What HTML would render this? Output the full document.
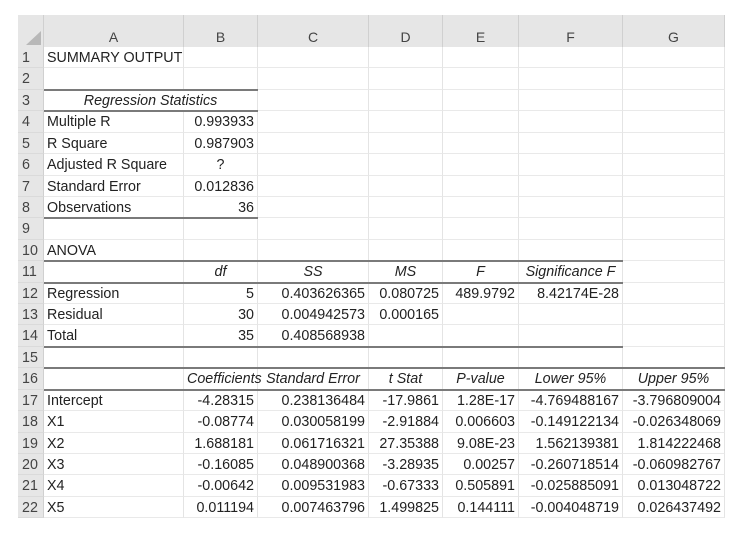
<!DOCTYPE html>
<html><head><meta charset="utf-8"><style>
*{box-sizing:border-box;margin:0;padding:0}
body{width:734px;height:537px;background:#fff;position:relative;overflow:hidden;font-family:"Liberation Sans",sans-serif;font-size:14.3px;color:#222}
.hdr{position:absolute;left:18px;top:15px;height:32px;width:707px;background:#e6e6e6;display:flex}
.hdr div{border-right:1px solid #d0d0d0;text-align:center;padding-top:14px;color:#444;font-size:14px}
.grid{position:absolute;left:18px;top:47px;width:707px}
.r{display:flex;height:21.43px}
.r div{border-right:1px solid #e4e4e4;border-bottom:1px solid #e9e9e9;line-height:23px;white-space:nowrap;overflow:visible;padding:0 3px}
.r div:first-child{background:#e6e6e6;border-right:1px solid #d0d0d0;border-bottom:1px solid #dadada;color:#444;padding-left:4px}
.w0{width:26px}.w1{width:140px}.w2{width:74px}.w3{width:111px}.w4{width:74px}.w5{width:76px}.w6{width:104px}.w7{width:102px}
.n{text-align:right}.c{text-align:center}.i{font-style:italic;text-align:center}
.t{position:absolute;height:2px;background:#7a7a7a}
.tri{position:absolute;left:26px;top:31px;width:0;height:0;border-left:15px solid transparent;border-bottom:14px solid #b8b8b8}
</style></head><body>
<div class="hdr"><div class="w0"></div><div class="w1">A</div><div class="w2">B</div><div class="w3">C</div><div class="w4">D</div><div class="w5">E</div><div class="w6">F</div><div class="w7">G</div></div>
<div class="tri"></div>
<div class="grid">
<div class="r"><div class="w0">1</div><div class="w1">SUMMARY OUTPUT</div><div class="w2"></div><div class="w3"></div><div class="w4"></div><div class="w5"></div><div class="w6"></div><div class="w7"></div></div>
<div class="r"><div class="w0">2</div><div class="w1"></div><div class="w2"></div><div class="w3"></div><div class="w4"></div><div class="w5"></div><div class="w6"></div><div class="w7"></div></div>
<div class="r"><div class="w0">3</div><div class="i" style="width:214px;border-right-color:#e4e4e4">Regression Statistics</div><div class="w3"></div><div class="w4"></div><div class="w5"></div><div class="w6"></div><div class="w7"></div></div>
<div class="r"><div class="w0">4</div><div class="w1">Multiple R</div><div class="w2 n">0.993933</div><div class="w3"></div><div class="w4"></div><div class="w5"></div><div class="w6"></div><div class="w7"></div></div>
<div class="r"><div class="w0">5</div><div class="w1">R Square</div><div class="w2 n">0.987903</div><div class="w3"></div><div class="w4"></div><div class="w5"></div><div class="w6"></div><div class="w7"></div></div>
<div class="r"><div class="w0">6</div><div class="w1">Adjusted R Square</div><div class="w2 c">?</div><div class="w3"></div><div class="w4"></div><div class="w5"></div><div class="w6"></div><div class="w7"></div></div>
<div class="r"><div class="w0">7</div><div class="w1">Standard Error</div><div class="w2 n">0.012836</div><div class="w3"></div><div class="w4"></div><div class="w5"></div><div class="w6"></div><div class="w7"></div></div>
<div class="r"><div class="w0">8</div><div class="w1">Observations</div><div class="w2 n">36</div><div class="w3"></div><div class="w4"></div><div class="w5"></div><div class="w6"></div><div class="w7"></div></div>
<div class="r"><div class="w0">9</div><div class="w1"></div><div class="w2"></div><div class="w3"></div><div class="w4"></div><div class="w5"></div><div class="w6"></div><div class="w7"></div></div>
<div class="r"><div class="w0">10</div><div class="w1">ANOVA</div><div class="w2"></div><div class="w3"></div><div class="w4"></div><div class="w5"></div><div class="w6"></div><div class="w7"></div></div>
<div class="r"><div class="w0">11</div><div class="w1"></div><div class="w2 i">df</div><div class="w3 i">SS</div><div class="w4 i">MS</div><div class="w5 i">F</div><div class="w6 i">Significance F</div><div class="w7"></div></div>
<div class="r"><div class="w0">12</div><div class="w1">Regression</div><div class="w2 n">5</div><div class="w3 n">0.403626365</div><div class="w4 n">0.080725</div><div class="w5 n">489.9792</div><div class="w6 n">8.42174E-28</div><div class="w7"></div></div>
<div class="r"><div class="w0">13</div><div class="w1">Residual</div><div class="w2 n">30</div><div class="w3 n">0.004942573</div><div class="w4 n">0.000165</div><div class="w5"></div><div class="w6"></div><div class="w7"></div></div>
<div class="r"><div class="w0">14</div><div class="w1">Total</div><div class="w2 n">35</div><div class="w3 n">0.408568938</div><div class="w4"></div><div class="w5"></div><div class="w6"></div><div class="w7"></div></div>
<div class="r"><div class="w0">15</div><div class="w1"></div><div class="w2"></div><div class="w3"></div><div class="w4"></div><div class="w5"></div><div class="w6"></div><div class="w7"></div></div>
<div class="r"><div class="w0">16</div><div class="w1"></div><div class="w2 i">Coefficients</div><div class="w3 i">Standard Error</div><div class="w4 i">t Stat</div><div class="w5 i">P-value</div><div class="w6 i">Lower 95%</div><div class="w7 i">Upper 95%</div></div>
<div class="r"><div class="w0">17</div><div class="w1">Intercept</div><div class="w2 n">-4.28315</div><div class="w3 n">0.238136484</div><div class="w4 n">-17.9861</div><div class="w5 n">1.28E-17</div><div class="w6 n">-4.769488167</div><div class="w7 n">-3.796809004</div></div>
<div class="r"><div class="w0">18</div><div class="w1">X1</div><div class="w2 n">-0.08774</div><div class="w3 n">0.030058199</div><div class="w4 n">-2.91884</div><div class="w5 n">0.006603</div><div class="w6 n">-0.149122134</div><div class="w7 n">-0.026348069</div></div>
<div class="r"><div class="w0">19</div><div class="w1">X2</div><div class="w2 n">1.688181</div><div class="w3 n">0.061716321</div><div class="w4 n">27.35388</div><div class="w5 n">9.08E-23</div><div class="w6 n">1.562139381</div><div class="w7 n">1.814222468</div></div>
<div class="r"><div class="w0">20</div><div class="w1">X3</div><div class="w2 n">-0.16085</div><div class="w3 n">0.048900368</div><div class="w4 n">-3.28935</div><div class="w5 n">0.00257</div><div class="w6 n">-0.260718514</div><div class="w7 n">-0.060982767</div></div>
<div class="r"><div class="w0">21</div><div class="w1">X4</div><div class="w2 n">-0.00642</div><div class="w3 n">0.009531983</div><div class="w4 n">-0.67333</div><div class="w5 n">0.505891</div><div class="w6 n">-0.025885091</div><div class="w7 n">0.013048722</div></div>
<div class="r"><div class="w0">22</div><div class="w1">X5</div><div class="w2 n">0.011194</div><div class="w3 n">0.007463796</div><div class="w4 n">1.499825</div><div class="w5 n">0.144111</div><div class="w6 n">-0.004048719</div><div class="w7 n">0.026437492</div></div>
</div>
<div class="t" style="left:44px;width:214px;top:89px"></div>
<div class="t" style="left:44px;width:214px;top:110px"></div>
<div class="t" style="left:44px;width:214px;top:217px"></div>
<div class="t" style="left:44px;width:579px;top:260px"></div>
<div class="t" style="left:44px;width:579px;top:282px"></div>
<div class="t" style="left:44px;width:579px;top:346px"></div>
<div class="t" style="left:44px;width:681px;top:367px"></div>
<div class="t" style="left:44px;width:681px;top:389px"></div>
</body></html>
